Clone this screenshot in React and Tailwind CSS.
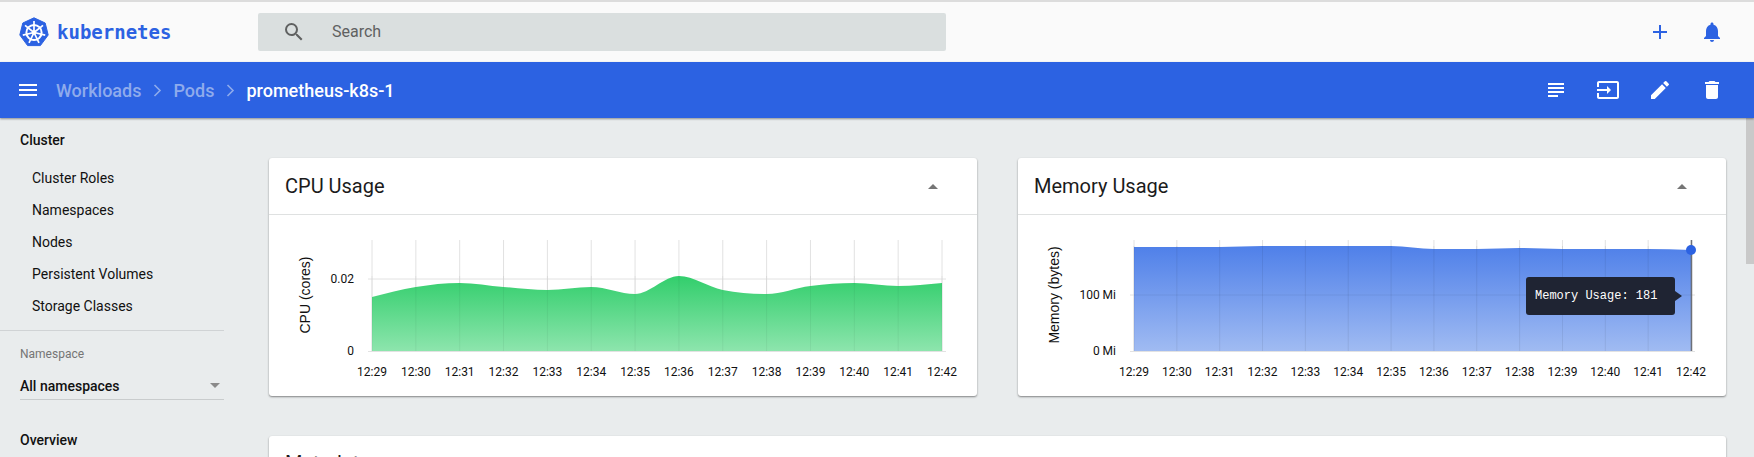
const clusterItems = ['Cluster Roles', 'Namespaces', 'Nodes', 'Persistent Volumes', 'Storage Classes']
const times = ['12:29', '12:30', '12:31', '12:32', '12:33', '12:34', '12:35', '12:36', '12:37', '12:38', '12:39', '12:40', '12:41', '12:42']

const cpuValues = [57, 47, 43, 47, 50, 47, 54, 36, 50, 54, 46, 43, 46, 43]
const memValues = [7, 7, 7, 6, 6, 6, 6, 9, 9, 8, 9, 9, 9, 10]

// monotone curve through the samples, flat at every local peak
function curve(values, step) {
  const slopes = values.map((v, i) => {
    if (i === 0) return (values[1] - v) / step
    if (i === values.length - 1) return (v - values[i - 1]) / step
    const a = v - values[i - 1]
    const b = values[i + 1] - v
    return a * b <= 0 ? 0 : (a + b) / (2 * step)
  })
  let d = `M0 ${values[0]}`
  for (let i = 1; i < values.length; i++) {
    const x0 = (i - 1) * step
    const x1 = i * step
    const c = step / 3
    d += ` C${x0 + c} ${values[i - 1] + slopes[i - 1] * c} ${x1 - c} ${values[i] - slopes[i] * c} ${x1} ${values[i]}`
  }
  return d
}

function Logo() {
  const spokes = [0, 51.4, 102.8, 154.3, 205.7, 257.1, 308.6]
  return (
    <svg width="30" height="30" viewBox="0 0 30 30">
      <path d="M15 0.8 L26.2 6 L29.2 18 L21.4 28.6 L8.6 28.6 L0.8 18 L3.8 6 Z" fill="#2c62e2" stroke="#2c62e2" strokeLinejoin="round" />
      <circle cx="15" cy="15.5" r="7.6" fill="none" stroke="#fff" strokeWidth="2" />
      <circle cx="15" cy="15.5" r="2.2" fill="#fff" />
      {spokes.map((a) => (
        <line key={a} x1="15" y1="15.5" x2="15" y2="4" stroke="#fff" strokeWidth="1.7" transform={`rotate(${a} 15 15.5)`} />
      ))}
    </svg>
  )
}

function Chevron() {
  return (
    <svg width="32" height="13" viewBox="0 0 32 13" fill="none" stroke="#8fabec" strokeWidth="1.6">
      <path d="M13.5 1 L19 6.5 L13.5 12" />
    </svg>
  )
}

function Card({ title, children }) {
  return (
    <section className="h-[238px] rounded-[3px] bg-white shadow-[0_1px_2px_rgba(0,0,0,0.45)]">
      <div className="flex h-[57px] items-center justify-between border-b border-[#dfe1e1] pl-4 pr-[39px]">
        <h2 className="text-[20px] text-[#1b1b1b]">{title}</h2>
        <span className="h-0 w-0 border-x-[5px] border-b-[5px] border-x-transparent border-b-[#757575]" />
      </div>
      {children}
    </section>
  )
}

function CpuChart() {
  const step = 570 / 13
  return (
    <svg width="708" height="181" viewBox="0 1 708 181" className="block" fontFamily="Roboto, sans-serif" fontSize="12" fill="#111">
      <defs>
        <linearGradient id="cpuFill" x1="0" y1="0" x2="0" y2="1">
          <stop offset="0" stopColor="#32ce6c" />
          <stop offset="1" stopColor="#8de5ad" />
        </linearGradient>
      </defs>
      <g transform="translate(103 26)">
        {times.map((t, i) => (
          <line key={t} x1={i * step} x2={i * step} y1="0" y2="111" stroke="#e2e2e2" />
        ))}
        <line x1="-4" x2="574" y1="39" y2="39" stroke="#e2e2e2" />
        <path d={`${curve(cpuValues, step)} L570 111 L0 111 Z`} fill="url(#cpuFill)" />
        {times.map((t, i) => (
          <line key={t} x1={i * step} x2={i * step} y1="36" y2="111" stroke="#000" strokeOpacity="0.05" />
        ))}
        <line x1="-4" x2="574" y1="111.5" y2="111.5" stroke="#e2e2e2" />
        {times.map((t, i) => (
          <text key={t} x={i * step} y="136" textAnchor="middle">{t}</text>
        ))}
        <text x="-18" y="43" textAnchor="end">0.02</text>
        <text x="-18" y="115" textAnchor="end">0</text>
        <text transform="translate(-62 55) rotate(-90)" textAnchor="middle" fontFamily="'Liberation Sans', sans-serif" fontSize="14">CPU (cores)</text>
      </g>
    </svg>
  )
}

function MemoryChart() {
  const step = 557 / 13
  return (
    <svg width="708" height="181" viewBox="0 1 708 181" className="block" fontFamily="Roboto, sans-serif" fontSize="12" fill="#111">
      <defs>
        <linearGradient id="memFill" x1="0" y1="0" x2="0" y2="1">
          <stop offset="0" stopColor="#4f80e9" />
          <stop offset="1" stopColor="#a0bbf2" />
        </linearGradient>
      </defs>
      <g transform="translate(116 26)">
        {times.map((t, i) => (
          <line key={t} x1={i * step} x2={i * step} y1="0" y2="111" stroke="#e2e2e2" />
        ))}
        <line x1="-4" x2="561" y1="55" y2="55" stroke="#e2e2e2" />
        <path d={`${curve(memValues, step)} L557 111 L0 111 Z`} fill="url(#memFill)" />
        {times.map((t, i) => (
          <line key={t} x1={i * step} x2={i * step} y1="6" y2="111" stroke="#000" strokeOpacity="0.07" />
        ))}
        <line x1="0" x2="557" y1="55" y2="55" stroke="#000" strokeOpacity="0.06" />
        <line x1="-4" x2="561" y1="111.5" y2="111.5" stroke="#e2e2e2" />
        <line x1="557.5" x2="557.5" y1="0" y2="111" stroke="#6d7078" strokeWidth="1.5" />
        <circle cx="557" cy="10" r="5" fill="#2c62e2" />
        {times.map((t, i) => (
          <text key={t} x={i * step} y="136" textAnchor="middle">{t}</text>
        ))}
        <text x="-18" y="59" textAnchor="end">100 Mi</text>
        <text x="-18" y="115" textAnchor="end">0 Mi</text>
        <text transform="translate(-75 55) rotate(-90)" textAnchor="middle" fontFamily="'Liberation Sans', sans-serif" fontSize="14">Memory (bytes)</text>
      </g>
    </svg>
  )
}

export default function App() {
  return (
    <div className="flex h-[457px] w-[1754px] flex-col overflow-hidden bg-[#e9eced] font-['Roboto',sans-serif]">
      <header className="flex h-[62px] shrink-0 items-center border-t-2 border-[#dcdcdc] bg-[#fafafa] pl-[19px]">
        <Logo />
        <span className="ml-[8px] w-[201px] font-['DejaVu_Sans_Mono',monospace] text-[19px] font-bold text-[#2c62e2]">kubernetes</span>
        <div className="flex h-[38px] w-[688px] items-center rounded-[2px] bg-[#dadfdf] pl-[24px] text-[16px] text-[#5f6161]">
          <svg width="24" height="24" viewBox="0 0 24 24" fill="#5f6161">
            <path d="M15.5 14h-.79l-.28-.27A6.47 6.47 0 0 0 16 9.5 6.5 6.5 0 1 0 9.5 16c1.61 0 3.09-.59 4.23-1.57l.27.28v.79l5 4.99L20.49 19l-4.99-5zm-6 0C7.01 14 5 11.99 5 9.5S7.01 5 9.5 5 14 7.01 14 9.5 11.99 14 9.5 14z" />
          </svg>
          <span className="ml-[26px]">Search</span>
        </div>
        <div className="ml-auto flex items-center gap-[28px] pr-[30px]">
          <svg width="24" height="24" viewBox="0 0 24 24" fill="#2c62e2"><path d="M19 13h-6v6h-2v-6H5v-2h6V5h2v6h6v2z" /></svg>
          <svg width="24" height="24" viewBox="0 0 24 24" fill="#2c62e2"><path d="M12 22c1.1 0 2-.9 2-2h-4c0 1.1.9 2 2 2zm6-6v-5c0-3.07-1.63-5.64-4.5-6.32V4c0-.83-.67-1.5-1.5-1.5s-1.5.67-1.5 1.5v.68C7.64 5.36 6 7.92 6 11v5l-2 2v1h16v-1l-2-2z" /></svg>
        </div>
      </header>

      <div className="relative flex h-[56px] shrink-0 items-center bg-[#2c62e2] pl-[16px] shadow-[0_1px_2px_rgba(0,0,0,0.4)]">
        <svg width="24" height="24" viewBox="0 0 24 24" fill="#fff"><path d="M3 18h18v-2H3v2zm0-5h18v-2H3v2zm0-7v2h18V6H3z" /></svg>
        <nav className="ml-[16px] flex items-center text-[18px] font-medium text-[#8fabec]">
          <span>Workloads</span>
          <Chevron />
          <span>Pods</span>
          <Chevron />
          <span className="text-white">prometheus-k8s-1</span>
        </nav>
        <div className="ml-auto flex items-center gap-[28px] pr-[30px]">
          <svg width="24" height="24" viewBox="0 0 24 24" fill="#fff"><path d="M14 17H4v2h10v-2zm6-8H4v2h16V9zM4 15h16v-2H4v2zM4 5v2h16V5H4z" /></svg>
          <svg width="24" height="24" viewBox="0 0 24 24" fill="#fff"><path d="M21 3.01H3c-1.1 0-2 .9-2 2V9h2V4.99h18v14.03H3V15H1v4.01c0 1.1.9 1.98 2 1.98h18c1.1 0 2-.88 2-1.98v-14c0-1.11-.9-2-2-2zM11 16l4-4-4-4v3H1v2h10v3z" /></svg>
          <svg width="24" height="24" viewBox="0 0 24 24" fill="#fff"><path d="M3 17.25V21h3.75L17.81 9.94l-3.75-3.75L3 17.25zM20.71 7.04a1 1 0 0 0 0-1.41l-2.34-2.34a1 1 0 0 0-1.41 0l-1.83 1.83 3.75 3.75 1.83-1.83z" /></svg>
          <svg width="24" height="24" viewBox="0 0 24 24" fill="#fff"><path d="M6 19c0 1.1.9 2 2 2h8c1.1 0 2-.9 2-2V7H6v12zM19 4h-3.5l-1-1h-5l-1 1H5v2h14V4z" /></svg>
        </div>
      </div>

      <div className="flex min-h-0 flex-1">
        <aside className="w-[269px] shrink-0 pt-[14px] text-[14px] text-[#111]">
          <div className="w-[224px]">
            <h3 className="pl-[20px] font-medium leading-[16px]">Cluster</h3>
            <ul className="mt-[14px] border-b border-[#d0d3d5] pb-[8px] pl-[32px]">
              {clusterItems.map((item) => (
                <li key={item} className="flex h-[32px] items-center">{item}</li>
              ))}
            </ul>
            <div className="pl-[20px]">
              <p className="mt-[15px] text-[12px] leading-[16px] text-[#757575]">Namespace</p>
              <div className="mt-[14px] flex h-[24px] items-start justify-between border-b border-[#c9cccd] pr-[4px] font-medium">
                <span className="leading-[20px]">All namespaces</span>
                <span className="mt-[7px] h-0 w-0 border-x-[5px] border-t-[5px] border-x-transparent border-t-[#8a8a8a]" />
              </div>
            </div>
            <h3 className="mt-[32px] pl-[20px] font-medium leading-[16px]">Overview</h3>
          </div>
        </aside>

        <main className="min-w-0 flex-1 pt-[40px]">
          <div className="w-[1457px]">
            <div className="grid grid-cols-[708px_708px] gap-[41px]">
              <Card title="CPU Usage"><CpuChart /></Card>
              <Card title="Memory Usage">
                <div className="relative">
                  <MemoryChart />
                  <div className="absolute left-[508px] top-[62px] flex h-[38px] w-[149px] items-center rounded-[3px] bg-[#1f2433] pl-[9px] font-['Liberation_Mono',monospace] text-[12px] text-white">
                    Memory Usage: 181
                    <span className="absolute left-full top-[14px] h-0 w-0 border-y-[5px] border-l-[7px] border-y-transparent border-l-[#1f2433]" />
                  </div>
                </div>
              </Card>
            </div>
            <section className="mt-[40px] h-[120px] rounded-[3px] bg-white px-4 pt-[13px] text-[20px] leading-[28px] text-[#1b1b1b] shadow-[0_1px_2px_rgba(0,0,0,0.45)]">Metadata</section>
          </div>
        </main>

        <div className="w-[8px] shrink-0">
          <div className="h-[146px] bg-[#c9c9c9]" />
        </div>
      </div>
    </div>
  )
}
